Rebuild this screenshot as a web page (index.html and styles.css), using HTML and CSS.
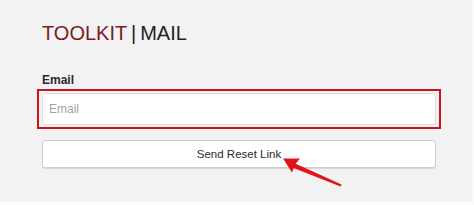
FILE: index.html
```html
<!DOCTYPE html>
<html>
<head>
<meta charset="utf-8">
<link rel="stylesheet" href="styles.css">
</head>
<body>
<div class="page">
  <h1 class="brand"><span class="brand-red">TOOLKIT</span> | MAIL</h1>
  <label class="field-label" for="email">Email</label>
  <div class="highlight">
    <input class="field-input" id="email" type="text" placeholder="Email">
  </div>
  <button class="btn" type="button">Send Reset Link</button>
  <svg class="arrow" width="474" height="205" viewBox="0 0 474 205">
    <polygon points="293,162.5 341.5,184.5 340.5,186.5 291,167" fill="#e0141b"/>
    <polygon points="283,158.5 300,158.5 295,164.5 292,172.5" fill="#e0141b"/>
  </svg>
</div>
</body>
</html>
```
FILE: styles.css
```css
html, body {
  margin: 0;
  padding: 0;
  background: #fafafa;
}
.page {
  position: relative;
  box-sizing: border-box;
  width: 472px;
  height: 201px;
  background: #f2f2f2;
  padding: 21px 36px 0 42px;
  font-family: "Liberation Sans", Arial, sans-serif;
  color: #222;
}
.brand {
  margin: 0;
  font-size: 20px;
  line-height: 24px;
  font-weight: normal;
  word-spacing: -1.5px;
  color: #222;
}
.brand-red {
  color: #7d1a25;
}
.field-label {
  display: block;
  margin-top: 28px;
  font-size: 12px;
  line-height: 14px;
  font-weight: bold;
  color: #2a2a2a;
}
.highlight {
  margin: 2px 0 0 -5px;
  width: 394px;
  border: 2px solid #c8151d;
  padding: 2px 3px;
}
.field-input {
  display: block;
  box-sizing: border-box;
  width: 394px;
  height: 32px;
  margin: 0;
  padding: 0 6px;
  border: 1px solid #dcdde2;
  border-radius: 3px;
  background: #fff;
  font-family: "Liberation Sans", Arial, sans-serif;
  font-size: 12px;
  color: #333;
  outline: none;
}
.field-input::placeholder {
  color: #a2a2a6;
}
.btn {
  display: block;
  box-sizing: border-box;
  width: 394px;
  height: 28px;
  margin-top: 11px;
  padding: 0;
  border: 1px solid #cdcdcd;
  border-radius: 3px;
  background: #fff;
  box-shadow: 0 1px 0 #d8d8d8;
  font-family: "Liberation Sans", Arial, sans-serif;
  font-size: 11.5px;
  color: #2a2a2a;
}
.arrow {
  position: absolute;
  left: 0;
  top: 0;
  pointer-events: none;
}
```
